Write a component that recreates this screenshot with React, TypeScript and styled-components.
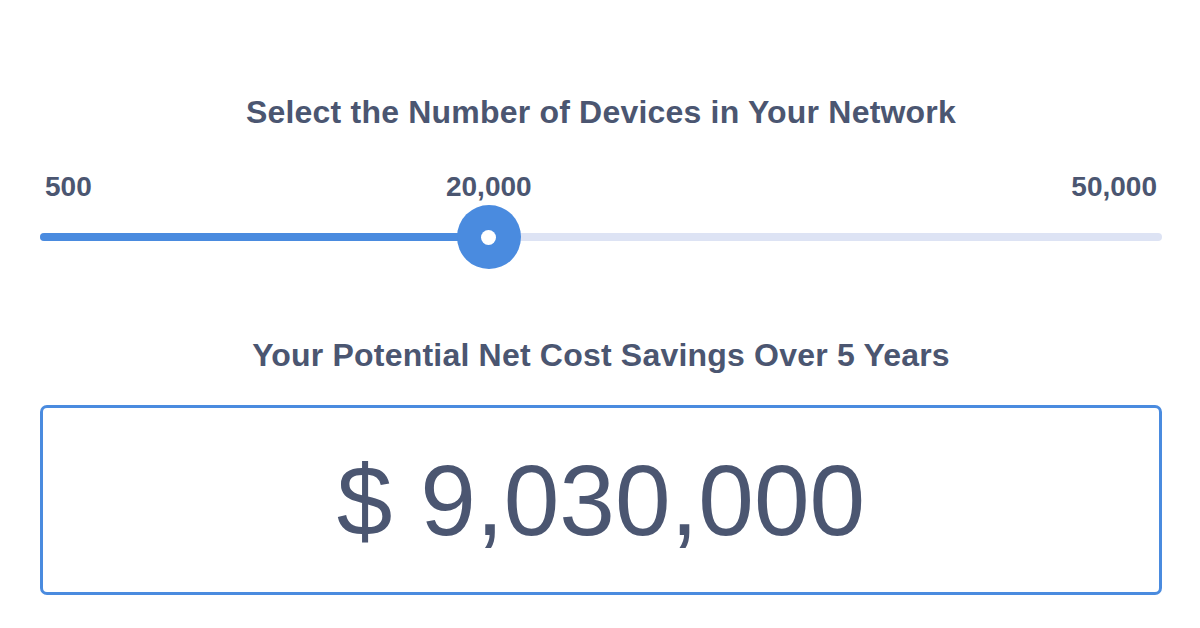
import React, { useState } from 'react'
import styled, { createGlobalStyle } from 'styled-components'

const GlobalStyle = createGlobalStyle`
  html, body {
    margin: 0;
    padding: 0;
    background: #ffffff;
    font-family: "Liberation Sans", Arial, sans-serif;
    color: #4b5671;
  }
`

const THUMB = 64

const PageWrapper = styled.div`
  width: 1122px;
  margin: 0 auto;
  padding-top: 92px;
  transform: translateX(1px);
`

const Heading = styled.h2`
  margin: 0;
  text-align: center;
  font-size: 32px;
  line-height: 40px;
  font-weight: 700;
  letter-spacing: 0.2px;
  color: #4b5671;
`

const SliderBlock = styled.div`
  margin-top: 39px;
`

const LabelRow = styled.div`
  position: relative;
  height: 32px;
  display: flex;
  justify-content: space-between;
  padding: 0 5px 0 5px;
`

const Label = styled.span`
  font-size: 28px;
  font-weight: 700;
  line-height: 32px;
  color: #4b5671;
`

const CurrentLabel = styled(Label)`
  position: absolute;
  top: 0;
  transform: translateX(-50%);
`

const Track = styled.div`
  position: relative;
  height: 8px;
  margin-top: 30px;
  border-radius: 4px;
  background: #dde3f4;
`

const Fill = styled.div`
  height: 100%;
  border-radius: 4px;
  background: #4a8bdf;
`

const Thumb = styled.div`
  position: absolute;
  top: 50%;
  width: ${THUMB}px;
  height: ${THUMB}px;
  border-radius: 50%;
  background: #4a8bdf;
  transform: translate(-50%, -50%);
  display: flex;
  align-items: center;
  justify-content: center;

  &::after {
    content: '';
    width: 15px;
    height: 15px;
    border-radius: 50%;
    background: #ffffff;
  }
`

const ResultBlock = styled.div`
  margin-top: 94px;
`

const ResultBox = styled.div`
  margin-top: 30px;
  height: 184px;
  border: 3px solid #4a8bdf;
  border-radius: 7px;
  display: flex;
  align-items: center;
  justify-content: center;
`

const Amount = styled.span`
  font-size: 100px;
  font-weight: 400;
  color: #4b5671;
  line-height: 1;
`

const MIN = 500
const MAX = 50000

const fmt = (n: number) => n.toLocaleString('en-US')

export default function App() {
  const [devices] = useState(20000)
  const ratio = (devices - MIN) / (MAX - MIN)
  // thumb centre stays inside the track, half a thumb from either end
  const pos = `calc(${THUMB / 2}px + ${ratio} * (100% - ${THUMB}px))`
  // savings per device over five years
  const savings = Math.round(devices * 451.5)

  return (
    <>
      <GlobalStyle />
      <PageWrapper>
        <Heading>Select the Number of Devices in Your Network</Heading>
        <SliderBlock>
          <LabelRow>
            <Label>{fmt(MIN)}</Label>
            <CurrentLabel style={{ left: pos }}>{fmt(devices)}</CurrentLabel>
            <Label>{fmt(MAX)}</Label>
          </LabelRow>
          <Track>
            <Fill style={{ width: pos }} />
            <Thumb style={{ left: pos }} />
          </Track>
        </SliderBlock>
        <ResultBlock>
          <Heading>Your Potential Net Cost Savings Over 5 Years</Heading>
          <ResultBox>
            <Amount>$ {fmt(savings)}</Amount>
          </ResultBox>
        </ResultBlock>
      </PageWrapper>
    </>
  )
}
